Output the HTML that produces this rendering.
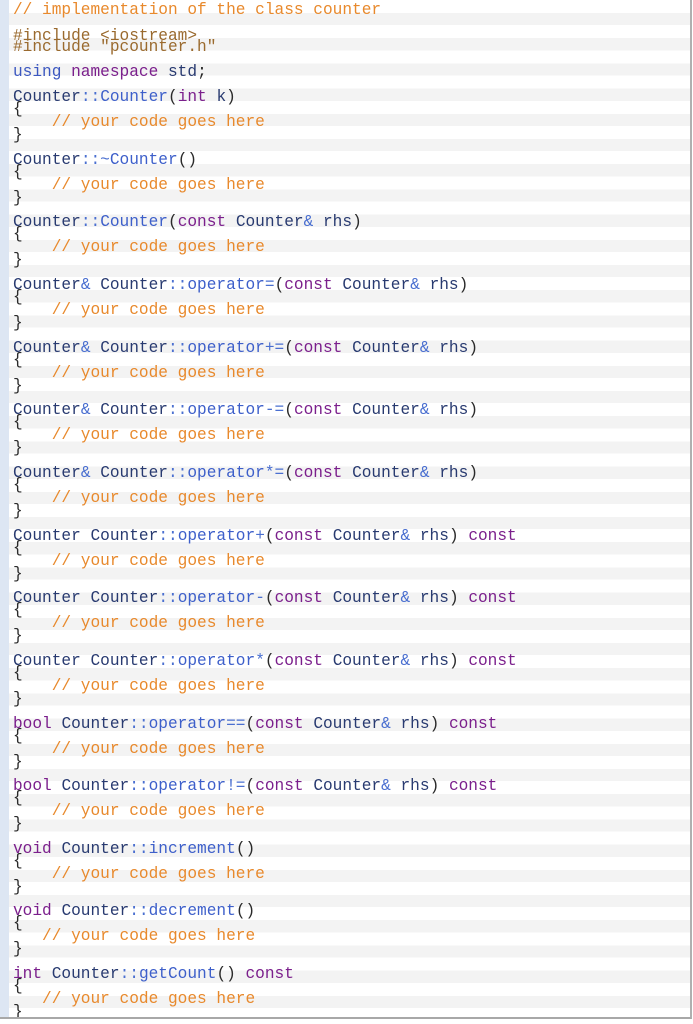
<!DOCTYPE html>
<html><head><meta charset="utf-8"><style>
html,body{margin:0;padding:0}
body{width:693px;height:1024px;position:relative;overflow:hidden;background:#fff;
font-family:"Liberation Mono","DejaVu Sans Mono",monospace;font-size:16.15px;}
#bg{position:absolute;left:0;top:0;width:690px;height:1017px;
background:repeating-linear-gradient(to bottom,#fff 0,#fff 13px,#f3f3f3 13px,#f3f3f3 25.2px);
background-position:0 0;border-right:2px solid #b0b0b0;border-bottom:2px solid #a8a8a8;}
#gut{position:absolute;left:0;top:0;width:9px;height:1017px;background:#dde6f3;}
#w{position:absolute;left:0;top:1px;width:690px;height:1016px;overflow:hidden}
.l{position:absolute;left:13px;white-space:pre;line-height:18px;color:#2a2a2a}
.c{color:#e8892c}.i{color:#9a6a2e}.k{color:#7b1f8c}.u{color:#3b57c0}.n{color:#283a70}.f{color:#3d5fca}.o{color:#4a6fd0}
</style></head><body>
<div id="bg"></div><div id="gut"></div>
<div id="w">
<div class="l c" style="top:0px">// implementation of the class counter</div>
<div class="l i" style="top:26px">#include &lt;iostream&gt;</div>
<div class="l i" style="top:37px">#include "pcounter.h"</div>
<div class="l" style="top:62px"><span class="u">using</span> <span class="k">namespace</span> <span class="n">std</span>;</div>

<div class="l" style="top:87px"><span class="n">Counter</span><span class="o">::</span><span class="f">Counter</span>(<span class="k">int</span> <span class="n">k</span>)</div>
<div class="l" style="top:99px">{</div><div class="l c" style="top:112px">    // your code goes here</div><div class="l" style="top:125px">}</div>

<div class="l" style="top:150px"><span class="n">Counter</span><span class="o">::~</span><span class="f">Counter</span>()</div>
<div class="l" style="top:162px">{</div><div class="l c" style="top:175px">    // your code goes here</div><div class="l" style="top:188px">}</div>

<div class="l" style="top:212px"><span class="n">Counter</span><span class="o">::</span><span class="f">Counter</span>(<span class="k">const</span> <span class="n">Counter</span><span class="o">&amp;</span> <span class="n">rhs</span>)</div>
<div class="l" style="top:224px">{</div><div class="l c" style="top:237px">    // your code goes here</div><div class="l" style="top:250px">}</div>

<div class="l" style="top:275px"><span class="n">Counter</span><span class="o">&amp;</span> <span class="n">Counter</span><span class="o">::</span><span class="f">operator</span><span class="o">=</span>(<span class="k">const</span> <span class="n">Counter</span><span class="o">&amp;</span> <span class="n">rhs</span>)</div>
<div class="l" style="top:287px">{</div><div class="l c" style="top:300px">    // your code goes here</div><div class="l" style="top:313px">}</div>

<div class="l" style="top:338px"><span class="n">Counter</span><span class="o">&amp;</span> <span class="n">Counter</span><span class="o">::</span><span class="f">operator</span><span class="o">+=</span>(<span class="k">const</span> <span class="n">Counter</span><span class="o">&amp;</span> <span class="n">rhs</span>)</div>
<div class="l" style="top:350px">{</div><div class="l c" style="top:363px">    // your code goes here</div><div class="l" style="top:376px">}</div>

<div class="l" style="top:400px"><span class="n">Counter</span><span class="o">&amp;</span> <span class="n">Counter</span><span class="o">::</span><span class="f">operator</span><span class="o">-=</span>(<span class="k">const</span> <span class="n">Counter</span><span class="o">&amp;</span> <span class="n">rhs</span>)</div>
<div class="l" style="top:412px">{</div><div class="l c" style="top:425px">    // your code goes here</div><div class="l" style="top:438px">}</div>

<div class="l" style="top:463px"><span class="n">Counter</span><span class="o">&amp;</span> <span class="n">Counter</span><span class="o">::</span><span class="f">operator</span><span class="o">*=</span>(<span class="k">const</span> <span class="n">Counter</span><span class="o">&amp;</span> <span class="n">rhs</span>)</div>
<div class="l" style="top:475px">{</div><div class="l c" style="top:488px">    // your code goes here</div><div class="l" style="top:501px">}</div>

<div class="l" style="top:526px"><span class="n">Counter</span> <span class="n">Counter</span><span class="o">::</span><span class="f">operator</span><span class="o">+</span>(<span class="k">const</span> <span class="n">Counter</span><span class="o">&amp;</span> <span class="n">rhs</span>) <span class="k">const</span></div>
<div class="l" style="top:538px">{</div><div class="l c" style="top:551px">    // your code goes here</div><div class="l" style="top:564px">}</div>

<div class="l" style="top:588px"><span class="n">Counter</span> <span class="n">Counter</span><span class="o">::</span><span class="f">operator</span><span class="o">-</span>(<span class="k">const</span> <span class="n">Counter</span><span class="o">&amp;</span> <span class="n">rhs</span>) <span class="k">const</span></div>
<div class="l" style="top:600px">{</div><div class="l c" style="top:613px">    // your code goes here</div><div class="l" style="top:626px">}</div>

<div class="l" style="top:651px"><span class="n">Counter</span> <span class="n">Counter</span><span class="o">::</span><span class="f">operator</span><span class="o">*</span>(<span class="k">const</span> <span class="n">Counter</span><span class="o">&amp;</span> <span class="n">rhs</span>) <span class="k">const</span></div>
<div class="l" style="top:663px">{</div><div class="l c" style="top:676px">    // your code goes here</div><div class="l" style="top:689px">}</div>

<div class="l" style="top:714px"><span class="k">bool</span> <span class="n">Counter</span><span class="o">::</span><span class="f">operator</span><span class="o">==</span>(<span class="k">const</span> <span class="n">Counter</span><span class="o">&amp;</span> <span class="n">rhs</span>) <span class="k">const</span></div>
<div class="l" style="top:726px">{</div><div class="l c" style="top:739px">    // your code goes here</div><div class="l" style="top:752px">}</div>

<div class="l" style="top:776px"><span class="k">bool</span> <span class="n">Counter</span><span class="o">::</span><span class="f">operator</span><span class="o">!=</span>(<span class="k">const</span> <span class="n">Counter</span><span class="o">&amp;</span> <span class="n">rhs</span>) <span class="k">const</span></div>
<div class="l" style="top:788px">{</div><div class="l c" style="top:801px">    // your code goes here</div><div class="l" style="top:814px">}</div>

<div class="l" style="top:839px"><span class="k">void</span> <span class="n">Counter</span><span class="o">::</span><span class="f">increment</span>()</div>
<div class="l" style="top:851px">{</div><div class="l c" style="top:864px">    // your code goes here</div><div class="l" style="top:877px">}</div>

<div class="l" style="top:901px"><span class="k">void</span> <span class="n">Counter</span><span class="o">::</span><span class="f">decrement</span>()</div>
<div class="l" style="top:913px">{</div><div class="l c" style="top:926px">   // your code goes here</div><div class="l" style="top:939px">}</div>

<div class="l" style="top:964px"><span class="k">int</span> <span class="n">Counter</span><span class="o">::</span><span class="f">getCount</span>() <span class="k">const</span></div>
<div class="l" style="top:976px">{</div><div class="l c" style="top:989px">   // your code goes here</div><div class="l" style="top:1002px">}</div>
</div>
</body></html>
